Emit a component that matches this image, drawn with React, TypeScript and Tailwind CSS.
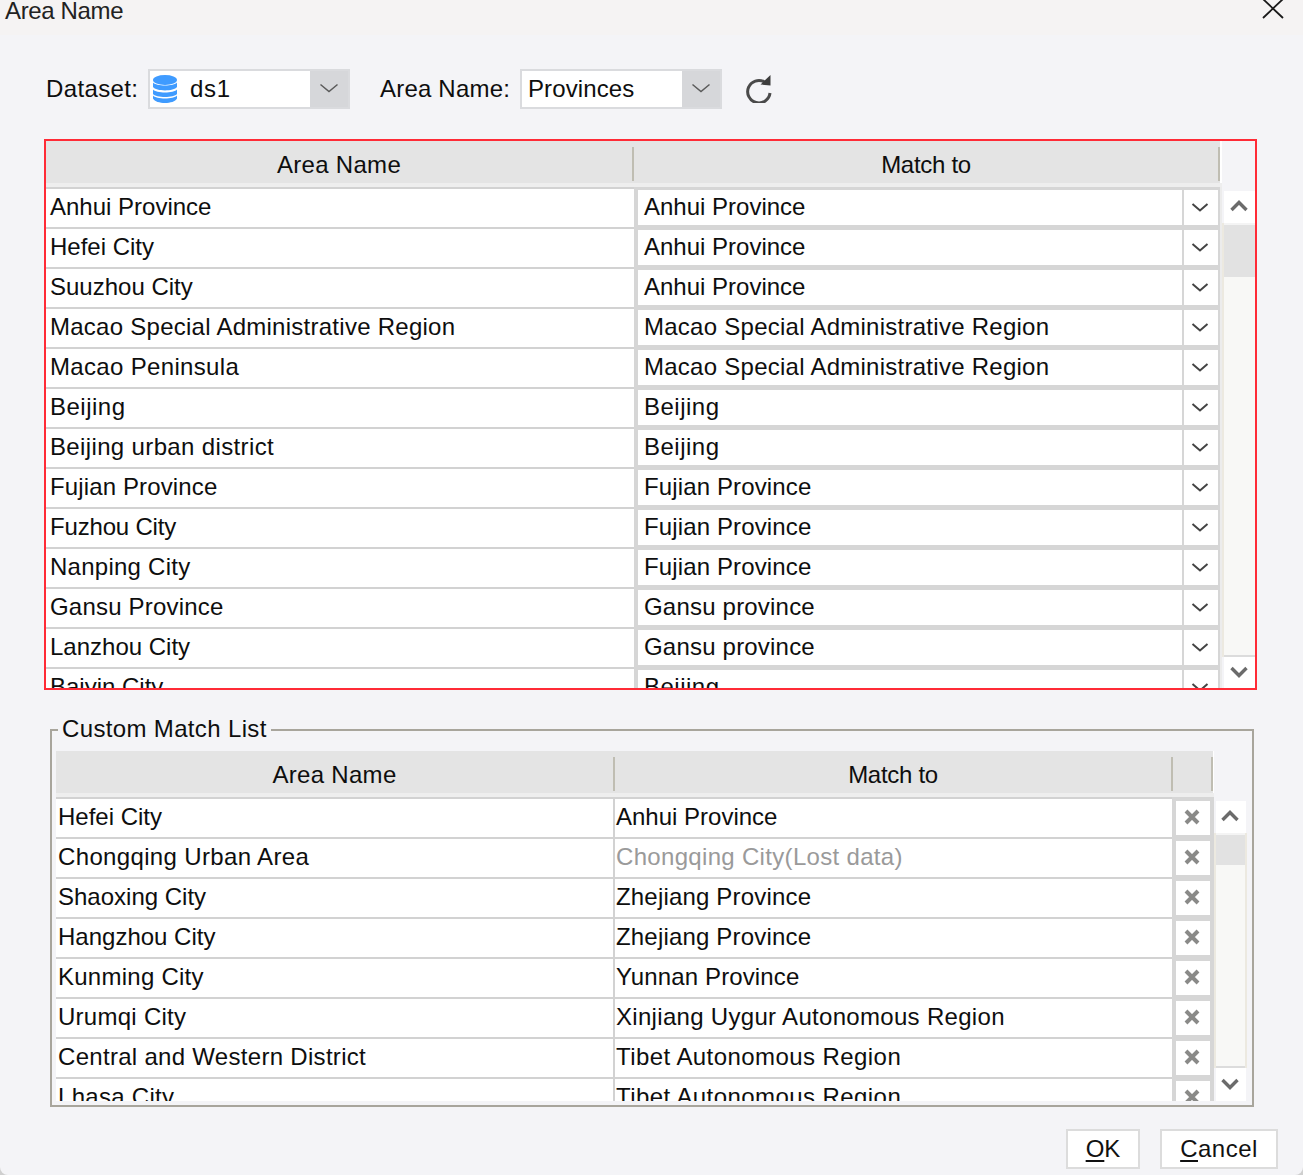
const mainRows: [string, string][] = [
  ["Anhui Province", "Anhui Province"],
  ["Hefei City", "Anhui Province"],
  ["Suuzhou City", "Anhui Province"],
  ["Macao Special Administrative Region", "Macao Special Administrative Region"],
  ["Macao Peninsula", "Macao Special Administrative Region"],
  ["Beijing", "Beijing"],
  ["Beijing urban district", "Beijing"],
  ["Fujian Province", "Fujian Province"],
  ["Fuzhou City", "Fujian Province"],
  ["Nanping City", "Fujian Province"],
  ["Gansu Province", "Gansu province"],
  ["Lanzhou City", "Gansu province"],
  ["Baiyin City", "Beijing"],
];

const customRows: [string, string][] = [
  ["Hefei City", "Anhui Province"],
  ["Chongqing Urban Area", "Chongqing City(Lost data)"],
  ["Shaoxing City", "Zhejiang Province"],
  ["Hangzhou City", "Zhejiang Province"],
  ["Kunming City", "Yunnan Province"],
  ["Urumqi City", "Xinjiang Uygur Autonomous Region"],
  ["Central and Western District", "Tibet Autonomous Region"],
  ["Lhasa City", "Tibet Autonomous Region"],
];

const spacing: Record<string, string> = {
  "Macao Special Administrative Region": "tracking-[0.26px]",
  "Macao Peninsula": "tracking-[0.33px]",
  Beijing: "tracking-[0.5px]",
  "Beijing urban district": "tracking-[0.36px]",
  "Fujian Province": "tracking-[0.13px]",
  "Fuzhou City": "tracking-[-0.18px]",
  "Nanping City": "tracking-[0.25px]",
  "Gansu Province": "tracking-[0.2px]",
  "Gansu province": "tracking-[0.2px]",
  "Chongqing Urban Area": "tracking-[0.35px]",
  "Chongqing City(Lost data)": "tracking-[0.32px]",
  "Kunming City": "tracking-[0.25px]",
  "Urumqi City": "tracking-[0.27px]",
  "Central and Western District": "tracking-[0.3px]",
  "Lhasa City": "tracking-[0.3px]",
  "Tibet Autonomous Region": "tracking-[0.43px]",
  "Xinjiang Uygur Autonomous Region": "tracking-[0.31px]",
  "Zhejiang Province": "tracking-[0.18px]",
  "Yunnan Province": "tracking-[0.13px]",
};

function Chevron() {
  return (
    <svg width="18" height="11" viewBox="0 0 18 11" className="-ml-[2px] -mt-[1px]">
      <path d="M1.5 2 L9 8.5 L16.5 2" fill="none" stroke="#444" strokeWidth="2" />
    </svg>
  );
}

function ComboChevron() {
  return (
    <svg width="20" height="11" viewBox="0 0 20 11" className="-mt-[1px]">
      <path d="M1.5 1.5 L10 8.5 L18.5 1.5" fill="none" stroke="#5a5a5a" strokeWidth="1.5" />
    </svg>
  );
}

function ScrollArrow({ up }: { up?: boolean }) {
  return (
    <svg width="18" height="12" viewBox="0 0 18 12" className="-ml-[2px] -mt-[2px]">
      <path
        d={up ? "M1.5 10 L9 2.5 L16.5 10" : "M1.5 2 L9 9.5 L16.5 2"}
        fill="none"
        stroke="#6b6b6b"
        strokeWidth="3.4"
      />
    </svg>
  );
}

function CloseGlyph() {
  return (
    <svg width="16" height="16" viewBox="0 0 16 16" className="-ml-[2px] -mt-[2px]">
      <path d="M2 2 L14 14 M14 2 L2 14" fill="none" stroke="#8a8a88" strokeWidth="4" />
    </svg>
  );
}

function Database() {
  return (
    <svg width="24" height="28" viewBox="0 0 24 28">
      <ellipse cx="12" cy="5" rx="12" ry="5" fill="#3f9bff" />
      <path d="M0 7.5 C3 11.5 21 11.5 24 7.5 V12 C21 16.5 3 16.5 0 12 Z" fill="#3f9bff" />
      <path d="M0 14.5 C3 18.5 21 18.5 24 14.5 V19 C21 23 3 23 0 19 Z" fill="#3f9bff" />
      <path d="M0 20.5 C3 24.5 21 24.5 24 20.5 V23.5 C21 29.5 3 29.5 0 23.5 Z" fill="#3f9bff" />
    </svg>
  );
}

function Refresh() {
  return (
    <svg width="28" height="28" viewBox="0 0 28 28" className="-mt-[1px]">
      <path d="M25 18 A11.2 11.2 0 1 1 19.5 7" fill="none" stroke="#4a4a4a" strokeWidth="3" />
      <path d="M25.5 0 V10.5 L15.5 9.5 Z" fill="#3c3c3c" />
    </svg>
  );
}

function Combo({ icon, text }: { icon?: boolean; text: string }) {
  return (
    <div className="flex h-[40px] w-[202px] border-2 border-[#dadbde] bg-[#d6d7da]">
      <div className={`flex w-[160px] items-center bg-white ${icon ? "gap-[13px] pl-[3px]" : "pl-[6px]"}`}>
        {icon ? <Database /> : null}
        <span className={icon ? "tracking-[0.7px]" : "tracking-[0.1px]"}>{text}</span>
      </div>
      <div className="flex flex-1 items-center justify-center">
        <ComboChevron />
      </div>
    </div>
  );
}

function HeaderCell({ label, className }: { label: string; className: string }) {
  return (
    <div className={`flex items-center justify-center pt-[6px] ${className}`}>
      <span className={label === "Area Name" ? "tracking-[0.3px]" : "tracking-[-0.3px]"}>{label}</span>
    </div>
  );
}

function Separator() {
  return <div className="mb-[2px] h-[34px] w-[2px] shrink-0 self-end bg-[#bfbdb2]" />;
}

function Scrollbar({
  thumb,
  down,
  bothEdges,
}: {
  thumb: string;
  down: string;
  bothEdges?: boolean;
}) {
  return (
    <div className="flex w-[33px] shrink-0 flex-col">
      <div className="h-[50px] shrink-0" />
      <div className={`ml-[2px] flex h-[32px] shrink-0 items-center justify-center bg-white ${bothEdges ? "mr-[1px]" : ""}`}>
        <ScrollArrow up />
      </div>
      <div
        className={`flex min-h-0 flex-1 flex-col border-l-2 border-[#ece9e0] bg-[#f8f8f6] ${
          bothEdges ? "border-r-2" : ""
        }`}
      >
        <div className="h-[2px] shrink-0 bg-[#f4f4f4]" />
        <div className={`${thumb} shrink-0 bg-[#e2e2e2]`} />
        <div className="flex-1" />
        <div className="h-[2px] shrink-0 bg-[#dcdcdc]" />
      </div>
      <div className={`ml-[2px] flex ${down} shrink-0 items-center justify-center bg-white ${bothEdges ? "mr-[1px]" : ""}`}>
        <ScrollArrow />
      </div>
    </div>
  );
}

function MainRow({ left, right }: { left: string; right: string }) {
  return (
    <div className="flex h-[40px] shrink-0">
      <div className="flex h-[40px] w-[588px] items-center border-t-2 border-[#d2d2d2] bg-white pl-[4px]">
        <span className={`-mt-[3px] ${spacing[left] ?? ""}`}>{left}</span>
      </div>
      <div className="flex h-[40px] w-[586px] border-t-[3px] border-b-2 border-l-4 border-r-2 border-[#d6d6d6] bg-white">
        <div className="flex flex-1 items-center pl-[6px]">
          <span className={`-mt-[2px] ${spacing[right] ?? ""}`}>{right}</span>
        </div>
        <div className="flex w-[36px] items-center justify-center border-l-2 border-[#d6d6d6]">
          <Chevron />
        </div>
      </div>
      <div className="w-[2px] bg-[#ececec]" />
    </div>
  );
}

function CustomRow({ left, right }: { left: string; right: string }) {
  const lost = right.includes("Lost");
  return (
    <div className="flex h-[40px] shrink-0">
      <div className="flex h-[40px] w-[557px] items-center border-t-2 border-[#d2d2d2] bg-white pl-[2px]">
        <span className={`-mt-[3px] ${spacing[left] ?? ""}`}>{left}</span>
      </div>
      <div className="flex h-[40px] w-[559px] items-center border-t-2 border-l-2 border-[#d2d2d2] bg-white pl-[1px]">
        <span className={`-mt-[3px] ${spacing[right] ?? ""} ${lost ? "text-[#9a9a9a]" : ""}`}>{right}</span>
      </div>
      <div className="flex h-[40px] flex-1 items-center justify-center border-t-4 border-b-2 border-l-4 border-r-4 border-[#d6d6d6] bg-white">
        <CloseGlyph />
      </div>
    </div>
  );
}

function DialogButton({
  mark,
  rest,
  width,
  track,
}: {
  mark: string;
  rest: string;
  width: string;
  track: string;
}) {
  return (
    <button className={`flex h-[40px] ${width} items-center justify-center border-2 border-[#dcdcdc] bg-white text-[#111] ${track}`}>
      <span className="underline underline-offset-[3px]">{mark}</span>
      <span>{rest}</span>
    </button>
  );
}

export default function App() {
  return (
    <div className="h-[1175px] w-[1303px] overflow-hidden bg-[#cfcfcf]">
      <div
        className="flex h-[1175px] flex-col overflow-hidden rounded-b-[8px] bg-[#f4f4f7] text-[24px] leading-[28px] text-[#0e0e0e]"
        style={{ fontFamily: '"Liberation Sans", Arial, sans-serif' }}
      >
        <div className="flex h-[35px] shrink-0 items-start justify-between bg-[#f5f3f3] pl-[5px] pr-[19px]">
          <span className="-mt-[3px] tracking-[-0.35px] text-[#222]">Area Name</span>
          <svg width="22" height="19" viewBox="0 0 22 19">
            <path d="M1 -1 L21 18 M21 -1 L1 18" fill="none" stroke="#1a1a1a" strokeWidth="1.8" />
          </svg>
        </div>

        <div className="mt-[34px] flex h-[40px] shrink-0 items-center pl-[46px]">
          <span className="w-[102px] tracking-[0.37px]">Dataset:</span>
          <Combo icon text="ds1" />
          <span className="ml-[30px] w-[140px] tracking-[0.2px]">Area Name:</span>
          <Combo text="Provinces" />
          <div className="ml-[23px] flex items-center">
            <Refresh />
          </div>
        </div>

        <div className="ml-[44px] mt-[30px] flex h-[551px] w-[1213px] shrink-0 border-2 border-[#ff2b36]">
          <div className="flex w-[1176px] shrink-0 flex-col overflow-hidden">
            <div className="flex h-[42px] shrink-0 bg-[#e4e4e4]">
              <HeaderCell label="Area Name" className="w-[586px]" />
              <Separator />
              <HeaderCell label="Match to" className="flex-1" />
              <Separator />
              <div className="w-[2px] bg-white" />
            </div>
            <div className="h-[4px] shrink-0 bg-[#eeeeee]" />
            {mainRows.map((r, i) => (
              <MainRow key={i} left={r[0]} right={r[1]} />
            ))}
          </div>
          <Scrollbar thumb="h-[52px]" down="h-[31px]" />
        </div>

        <div className="relative ml-[50px] mt-[39px] h-[378px] w-[1204px] shrink-0 border-2 border-[#a8a59c] pl-[4px] pt-[20px]">
          <span className="absolute -top-[16px] left-[6px] bg-[#f4f4f7] px-[4px] tracking-[0.35px]">Custom Match List</span>
          <div className="flex h-[350px]">
            <div className="flex w-[1158px] shrink-0 flex-col overflow-hidden">
              <div className="flex h-[42px] shrink-0 bg-[#e4e4e4]">
                <HeaderCell label="Area Name" className="w-[557px]" />
                <Separator />
                <HeaderCell label="Match to" className="w-[556px]" />
                <Separator />
                <div className="w-[38px]" />
                <Separator />
                <div className="w-[1px] bg-white" />
              </div>
              <div className="h-[4px] shrink-0 bg-[#eeeeee]" />
              {customRows.map((r, i) => (
                <CustomRow key={i} left={r[0]} right={r[1]} />
              ))}
            </div>
            <div className="flex w-[34px] shrink-0">
              <Scrollbar thumb="h-[30px]" down="h-[33px]" bothEdges />
            </div>
          </div>
        </div>

        <div className="mt-[22px] flex shrink-0 justify-end gap-[20px] pr-[25px]">
          <DialogButton mark="O" rest="K" width="w-[74px]" track="" />
          <DialogButton mark="C" rest="ancel" width="w-[118px]" track="tracking-[0.5px]" />
        </div>
      </div>
    </div>
  );
}
